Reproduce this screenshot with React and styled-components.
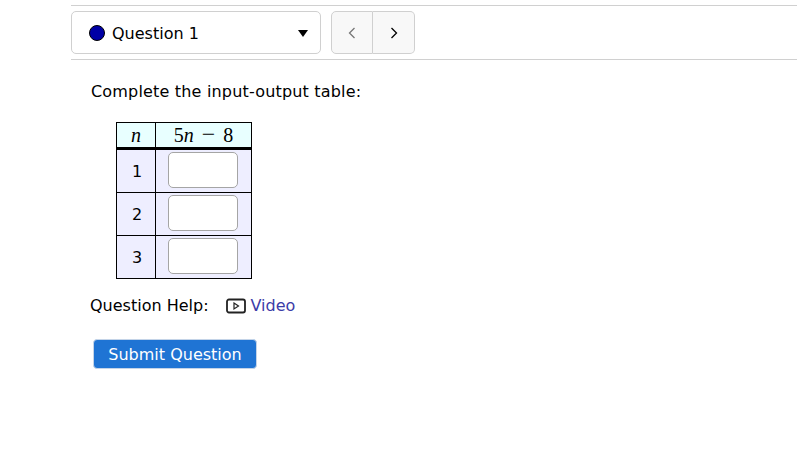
import React from 'react';
import styled, { createGlobalStyle } from 'styled-components';

const GlobalStyle = createGlobalStyle`
    html, body {
        margin: 0;
        padding: 0;
        background: #fff;
        color: #000;
        font-family: "DejaVu Sans", "Noto Sans", sans-serif;
        font-size: 16px;
    }
`;

const Page = styled.div`
    padding: 5px 0 0 71px;
`;

const Toolbar = styled.div`
    display: flex;
    gap: 10px;
    height: 43px;
    padding: 5px 0 5px;
    border-top: 1px solid #d0d0d0;
    border-bottom: 1px solid #d0d0d0;
`;

const QuestionSelect = styled.div`
    box-sizing: border-box;
    width: 250px;
    display: flex;
    align-items: center;
    padding: 0 12px 0 17px;
    border: 1px solid #d0d0d0;
    border-radius: 5px;
`;

const StatusDot = styled.span`
    width: 16px;
    height: 16px;
    border-radius: 50%;
    background: #0000a5;
    border: 1px solid #000;
    box-sizing: border-box;
    margin-right: 7px;
`;

const SelectLabel = styled.span`
    flex: 1;
    padding-top: 2px;
`;

const Caret = styled.span`
    width: 0;
    height: 0;
    border-left: 5px solid transparent;
    border-right: 5px solid transparent;
    border-top: 7px solid #000;
    margin-top: 1px;
`;

const NavGroup = styled.div`
    display: flex;
`;

const NavButton = styled.div`
    box-sizing: border-box;
    width: 42px;
    display: flex;
    align-items: center;
    justify-content: center;
    background: #f8f8f8;
    border: 1px solid #d0d0d0;
    border-left-width: ${(p) => (p.$first ? '1px' : '0')};
    border-radius: ${(p) => (p.$first ? '5px 0 0 5px' : '0 5px 5px 0')};
    color: ${(p) => (p.$first ? '#777' : '#000')};
`;

const Content = styled.div`
    padding: 21px 0 0 20px;
`;

const Prompt = styled.p`
    margin: 0;
    line-height: 22px;
    letter-spacing: 0.18px;
`;

const InputTable = styled.table`
    border-collapse: collapse;
    margin: 19px 0 0 25px;
    width: 136px;
`;

const HeadCell = styled.th`
    height: 24px;
    padding: 0;
    background: #e8ffff;
    border: 1px solid #000;
    border-bottom: 3px solid #000;
    font-family: "Liberation Serif", serif;
    font-weight: 400;
    font-size: 20px;
    line-height: 24px;
    width: ${(p) => p.$w};
`;

const Cell = styled.td`
    height: 42px;
    padding: 0;
    background: #eeeeff;
    border: 1px solid #000;
    text-align: center;
`;

const NumberCell = styled(Cell)`
    padding-left: 2px;
`;

const AnswerBox = styled.input`
    display: block;
    box-sizing: border-box;
    width: 70px;
    height: 36px;
    margin: -1px 0 1px 12px;
    padding: 0;
    background: #fff;
    border: 1px solid #a5a5a5;
    border-radius: 5px;
`;

const MathMinus = styled.span`
    margin: 0 8px;
    font-size: 24px;
    line-height: 0;
`;

const HelpRow = styled.div`
    display: flex;
    align-items: center;
    margin: 16px 0 0 -1px;
    line-height: 22px;
`;

const VideoIcon = styled.svg`
    width: 20px;
    height: 16px;
    margin: 0 5px 0 17px;
`;

const VideoLink = styled.a`
    color: #3c3ca8;
`;

const SubmitButton = styled.button`
    display: block;
    box-sizing: border-box;
    width: 164px;
    height: 30px;
    margin: 22px 0 0 2px;
    padding: 0;
    background: #1f74d4;
    color: #fff;
    border: 1px solid #c4d4e8;
    border-radius: 4px;
    font-family: inherit;
    font-size: 16px;
    font-weight: 500;
`;

const rows = [1, 2, 3];

export default function App() {
    return (
        <>
            <GlobalStyle />
            <Page>
                <Toolbar>
                    <QuestionSelect>
                        <StatusDot />
                        <SelectLabel>Question 1</SelectLabel>
                        <Caret />
                    </QuestionSelect>
                    <NavGroup>
                        <NavButton $first>
                            <svg width="10" height="14" viewBox="0 0 10 14" fill="none" stroke="currentColor" strokeWidth="1.3">
                                <path d="M7.5 2 L2.5 7 L7.5 12" />
                            </svg>
                        </NavButton>
                        <NavButton>
                            <svg width="10" height="14" viewBox="0 0 10 14" fill="none" stroke="currentColor" strokeWidth="1.3">
                                <path d="M2.5 2 L7.5 7 L2.5 12" />
                            </svg>
                        </NavButton>
                    </NavGroup>
                </Toolbar>
                <Content>
                    <Prompt>Complete the input-output table:</Prompt>
                    <InputTable>
                        <thead>
                            <tr>
                                <HeadCell $w="38px"><i>n</i></HeadCell>
                                <HeadCell>5<i>n</i><MathMinus>−</MathMinus>8</HeadCell>
                            </tr>
                        </thead>
                        <tbody>
                            {rows.map((n) => (
                                <tr key={n}>
                                    <NumberCell>{n}</NumberCell>
                                    <Cell><AnswerBox type="text" /></Cell>
                                </tr>
                            ))}
                        </tbody>
                    </InputTable>
                    <HelpRow>
                        Question Help:
                        <VideoIcon viewBox="0 0 20 16" fill="none" stroke="#222" strokeWidth="1.8">
                            <rect x="1" y="1.5" width="18" height="13" rx="2" />
                            <path d="M8 5 L12.5 8 L8 11 Z" strokeWidth="1.2" />
                        </VideoIcon>
                        <VideoLink>Video</VideoLink>
                    </HelpRow>
                    <SubmitButton>Submit Question</SubmitButton>
                </Content>
            </Page>
        </>
    );
}
